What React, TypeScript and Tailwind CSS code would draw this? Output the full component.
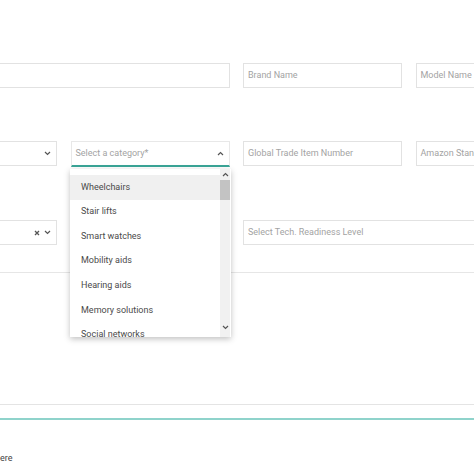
import React from 'react';

const Chevron = ({ up = false }: { up?: boolean }) => (
  <svg width="7" height="5" viewBox="0 0 7 5" className="shrink-0">
    <polyline
      points={up ? '1,4 3.5,1.5 6,4' : '1,1 3.5,3.5 6,1'}
      fill="none"
      stroke="#555"
      strokeWidth="1.2"
    />
  </svg>
);

const Cross = () => (
  <svg width="6" height="6" viewBox="0 0 6 6" className="shrink-0">
    <path d="M1 1 L5 5 M5 1 L1 5" stroke="#555" strokeWidth="1.3" />
  </svg>
);

const Field: React.FC<{ label?: string; span?: string }> = ({ label, span = '' }) => (
  <div className={`h-[25px] border border-[#e2e2e2] bg-white flex items-center pl-[4px] text-[9px] text-[#a3a3a3] whitespace-nowrap overflow-hidden ${span}`}>
    {label}
  </div>
);

const categories = [
  'Wheelchairs',
  'Stair lifts',
  'Smart watches',
  'Mobility aids',
  'Hearing aids',
  'Memory solutions',
  'Social networks',
];

export default function App() {
  return (
    <div className="relative w-[474px] h-[474px] overflow-hidden bg-white font-['Roboto','Liberation_Sans',sans-serif]">
      <div className="ml-[-102px] w-[680px] pt-[63px]">
        {/* row 1 */}
        <div className="grid grid-cols-[repeat(4,159px)] gap-x-[13.5px]">
          <Field span="col-span-2" />
          <Field label="Brand Name" />
          <Field label="Model Name" />
        </div>

        {/* row 2 */}
        <div className="grid grid-cols-[repeat(4,159px)] gap-x-[13.5px] mt-[53px]">
          <div className="h-[25px] border border-[#e2e2e2] flex items-center justify-end pr-[5px]">
            <Chevron />
          </div>
          <div className="h-[26px] border border-[#e8e8e8] border-b-2 border-b-[#3aa597] flex items-center justify-between pl-[4px] pr-[5px] text-[9px] text-[#a3a3a3]">
            <span>Select a category*</span>
            <Chevron up />
          </div>
          <Field label="Global Trade Item Number" />
          <Field label="Amazon Standard Identification Number" />
        </div>

        {/* row 3 */}
        <div className="grid grid-cols-[repeat(4,159px)] gap-x-[13.5px] mt-[53px]">
          <div className="h-[25px] border border-[#e2e2e2] flex items-center justify-end gap-[4px] pr-[5px]">
            <Cross />
            <Chevron />
          </div>
          <div className="h-[25px] flex items-center -ml-px">
            <div className="w-px h-[13px] bg-[#9a9a9a]" />
          </div>
          <Field label="Select Tech. Readiness Level" span="col-span-2" />
        </div>
      </div>

      <div className="mt-[27px] h-px bg-[#e6e6e6]" />

      <div className="mt-[131px] h-px bg-[#e4e4e4]" />
      <div className="mt-[13px] h-[2px] bg-[#8fd3cb]" />
      <div className="mt-[32px] -ml-[5px] text-[9px] text-[#444]">here</div>

      {/* open dropdown */}
      <div className="absolute left-[70px] top-[169px] w-[161px] h-[168px] bg-white shadow-[0_2px_6px_rgba(0,0,0,0.25)] overflow-hidden flex">
        <div className="flex-1 pt-[6px]">
          {categories.map((c, i) => (
            <div
              key={c}
              className={`h-[24.6px] flex items-center pl-[11px] text-[9px] text-[#4a4a4a] ${i === 0 ? 'bg-[#f0f0f0]' : ''}`}
            >
              {c}
            </div>
          ))}
        </div>
        <div className="w-[10px] mr-px bg-[#f1f1f1] flex flex-col items-center">
          <div className="h-[11px] flex items-center">
            <Chevron up />
          </div>
          <div className="w-[10px] h-[20px] bg-[#c3c3c3]" />
          <div className="flex-1" />
          <div className="h-[12px] flex items-start">
            <Chevron />
          </div>
        </div>
      </div>
    </div>
  );
}
